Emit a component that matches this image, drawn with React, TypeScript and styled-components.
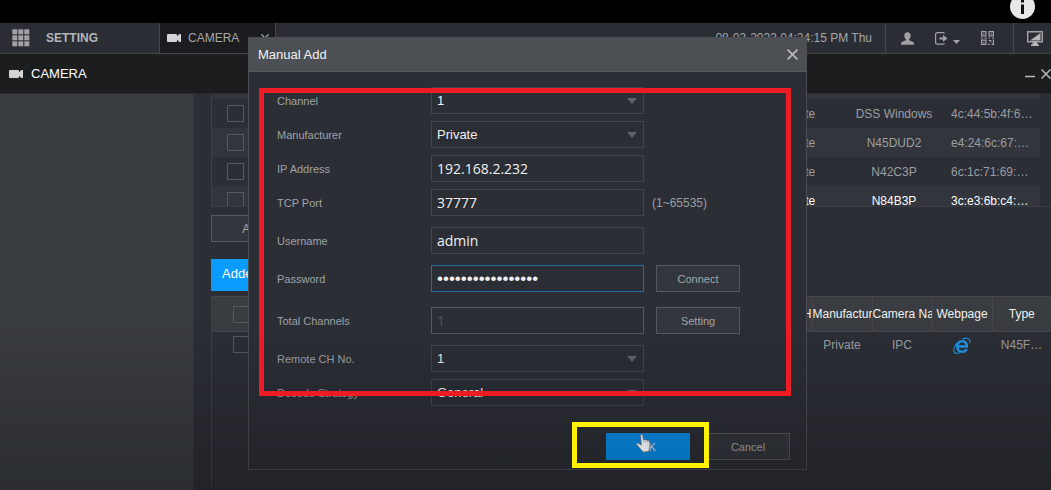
import React from "react";
import styled, { createGlobalStyle, css } from "styled-components";

const GlobalStyle = createGlobalStyle`
  * { box-sizing: border-box; }
  body {
    margin: 0;
    background: #2b2e35;
    font-family: "Liberation Sans", Arial, sans-serif;
    font-size: 12px;
    color: #9c9ea2;
  }
  button, input, select { font-family: inherit; margin: 0; }
`;

const Page = styled.div`
  position: relative;
  display: flex;
  flex-direction: column;
  min-height: 100vh;
  overflow: hidden;
`;

const Letterbox = styled.div`
  height: 23px;
  background: #000;
`;

const InfoBadge = styled.button`
  position: absolute;
  top: -6px;
  right: 16px;
  width: 25px;
  height: 25px;
  padding: 0;
  border: 0;
  background: none;
  svg { display: block; }
`;

const NavBar = styled.nav`
  display: flex;
  height: 31px;
  background: #2a2d33;
  border-bottom: 1px solid #45474b;
`;

const Brand = styled.a`
  display: flex;
  align-items: center;
  gap: 16px;
  width: 160px;
  padding-left: 12px;
  border-right: 1px solid #45474b;
  color: #b4b6b9;
  font-weight: bold;
  text-decoration: none;
`;

const NavTab = styled.a`
  display: flex;
  align-items: center;
  gap: 7px;
  width: 116px;
  padding: 0 6px 0 7px;
  background: #1b1c1f;
  border-right: 1px solid #45474b;
  color: #a4a6a9;
  text-decoration: none;
  svg:last-child { margin-left: auto; }
`;

const Clock = styled.time`
  display: flex;
  align-items: center;
  margin-left: auto;
  padding-right: 13px;
  color: #a4a6a9;
`;

const NavTools = styled.div`
  display: flex;
  align-items: center;
  padding: 0 19px 0 15px;
  border-left: 1px solid #45474b;
  gap: 21px;
`;

const NavDisplay = styled(NavTools)`
  padding: 0 8px 0 13px;
`;

const IconButton = styled.button`
  display: flex;
  align-items: center;
  gap: 5px;
  padding: 0;
  border: 0;
  background: none;
  color: #a4a6a9;
`;

const TitleBar = styled.header`
  display: flex;
  align-items: center;
  gap: 8px;
  height: 40px;
  padding-left: 9px;
  background: #1c1d1f;
  color: #fff;
  border-bottom: 1px solid #26282b;
`;

const Title = styled.h1`
  margin: 0;
  font-size: 13px;
  font-weight: normal;
`;

const WindowControls = styled.div`
  display: flex;
  gap: 6px;
  margin-left: auto;
`;

const Main = styled.main`
  display: flex;
  flex: 1;
`;

const Sidebar = styled.aside`
  flex: 0 0 194px;
  background: #393c40;
  border-right: 1px solid #33363b;
`;

const Content = styled.section`
  display: flex;
  flex-direction: column;
  flex: 1;
  min-width: 0;
  padding-left: 17px;
`;

const FoundDevices = styled.div`
  height: 113px;
  padding-right: 11px;
  overflow: hidden;
  border-bottom: 1px solid #393c41;
`;

const Table = styled.table`
  width: 100%;
  table-layout: fixed;
  border-collapse: collapse;
  td, th {
    padding: 0;
    text-align: center;
    font-weight: normal;
    white-space: nowrap;
    overflow: hidden;
  }
`;

const FoundTable = styled(Table)`
  border-collapse: separate;
  border-spacing: 0;
  border-top: 5px solid #32353b;
  border-left: 1px solid #3d4045;
`;

const FoundRow = styled.tr<{ $active?: boolean }>`
  height: 29px;
  color: ${(p) => (p.$active ? "#fff" : "#9c9ea2")};
  &:nth-child(even) { background: #32353b; }
  td:last-child { padding-left: 7px; text-align: left; }
`;

const Check = styled.input`
  appearance: none;
  display: block;
  width: 17px;
  height: 17px;
  margin: 0 auto 0 15px;
  border: 1px solid #55585d;
  background: transparent;
`;

const AddedCheck = styled(Check)`
  margin-left: 21px;
`;

const Button = styled.button<{ $primary?: boolean }>`
  width: 84px;
  height: 27px;
  padding: 0;
  border: 1px solid ${(p) => (p.$primary ? "#078de8" : "#55585d")};
  background: ${(p) => (p.$primary ? "#078de8" : "#33363d")};
  color: ${(p) => (p.$primary ? "#d5e9f8" : "#a4a6a9")};
  font-size: 11px;
`;

const AddButton = styled(Button)`
  margin: 8px 0 17px;
  font-size: 12px;
`;

const AddedTab = styled.button`
  align-self: flex-start;
  height: 32px;
  margin-bottom: 5px;
  padding: 0 11px 3px;
  border: 0;
  background: #0a9bff;
  color: #fff;
  font-size: 13px;
`;

const AddedPanel = styled.div`
  flex: 1;
  border-left: 1px solid #3d4045;
`;

const AddedTable = styled(Table)`
  thead tr {
    height: 35px;
    background: #393c40;
    color: #f2f2f2;
    border-top: 1px solid #45474b;
    border-bottom: 1px solid #45474b;
  }
  tbody tr { height: 26px; }
  td svg { display: block; margin: 2px auto 0; }
`;

const HeadCell = styled.th<{ $align?: "left" | "right" }>`
  border-right: 1px solid #45474b;
  && { text-align: ${(p) => p.$align ?? "center"}; }
`;

const Layer = styled.div`
  position: absolute;
  inset: 0;
  display: flex;
  justify-content: center;
  align-items: flex-start;
  padding: 37px 0 0 4px;
`;

const Shade = styled.div`
  position: absolute;
  inset: 0;
  pointer-events: none;
  background: linear-gradient(to bottom, rgba(0, 0, 0, 0) 64%, rgba(0, 0, 0, 0.24) 100%);
`;

const Dialog = styled.div`
  width: 559px;
  background: #2b2e35;
  border: 1px solid #4a4d51;
`;

const DialogHeader = styled.div`
  display: flex;
  align-items: center;
  justify-content: space-between;
  height: 34px;
  padding: 0 8px 0 9px;
  background: #4c5054;
  border-bottom: 1px solid #55585c;
  color: #f2f2f2;
`;

const DialogTitle = styled.h2`
  margin: 0;
  font-size: 13px;
  font-weight: normal;
`;

const DialogBody = styled.div`
  padding: 15px 28px 16px;
`;

const rowGap = { none: 0, tight: 7, loose: 11, wide: 15 };

const Row = styled.div<{ $gap: keyof typeof rowGap }>`
  display: grid;
  grid-template-columns: 154px 213px auto;
  align-items: center;
  height: 27px;
  margin-top: ${(p) => rowGap[p.$gap]}px;
`;

const Label = styled.label`
  font-size: 11px;
  color: #a0a2a6;
`;

const field = css`
  width: 100%;
  height: 27px;
  padding: 0 5px;
  border: 1px solid #42454a;
  border-radius: 0;
  background: transparent;
  color: #f0f0f0;
  outline: none;
`;

const Input = styled.input<{ $focused?: boolean }>`
  ${field};
  border-color: ${(p) => (p.$focused ? "#226ca8" : "#42454a")};
  font-family: "Open Sans", "Noto Sans", sans-serif;
  font-size: 14px;
  &[type="password"] {
    font-family: "Liberation Sans", Arial, sans-serif;
    font-size: 17px;
  }
  &:disabled { border-color: #55585d; color: #55585d; }
`;

const SelectBox = styled.div`
  position: relative;
  svg {
    position: absolute;
    right: 7px;
    top: 11px;
    pointer-events: none;
  }
`;

const Select = styled.select`
  ${field};
  display: block;
  appearance: none;
  font-size: 13px;
`;

const Extra = styled.div`
  padding-left: 12px;
`;

const Hint = styled.span`
  margin-left: -4px;
  color: #9c9ea2;
`;

const DialogFooter = styled.div`
  display: flex;
  justify-content: flex-end;
  gap: 16px;
  padding: 10px 16px 9px;
  border-top: 1px solid #2e3138;
`;

const Marks = styled(Layer)`
  pointer-events: none;
`;

const MarkArea = styled.div`
  position: relative;
  width: 559px;
`;

const Frame = styled.div`
  position: absolute;
  border: 5px solid #ed1c24;
  top: 51px;
  left: 11px;
  width: 532px;
  height: 308px;
`;

const OkFrame = styled(Frame)`
  border-color: #fff200;
  top: 385px;
  left: 324px;
  width: 137px;
  height: 46px;
`;

const Pointer = styled.svg`
  position: absolute;
  top: 397px;
  left: 388px;
`;

const CameraIcon = () => (
  <svg width="14" height="10" viewBox="0 0 14 10" fill="#d2d3d5">
    <rect y="1" width="10" height="8" rx="1" />
    <path d="M9 4l3.500-3H14v8h-1.500L9 6z" />
  </svg>
);

const Cross = ({ size = 10 }: { size?: number }) => (
  <svg width={size} height={size} viewBox="0 0 10 10" stroke="#b8babc" strokeWidth="1.500" fill="none">
    <path d="M.5.5l9 9M9.500.5l-9 9" />
  </svg>
);

const Caret = () => (
  <svg width="10" height="6" viewBox="0 0 10 6" fill="#606368">
    <path d="M0 0h10L5 6z" />
  </svg>
);

const GridIcon = () => (
  <svg width="18" height="18" viewBox="0 0 18 18" fill="#a0a2a5">
    {[0, 6, 12].map((y) => [0, 6, 12].map((x) => <rect key={`${x}-${y}`} x={x + 0.3} y={y + 0.3} width="5" height="5" />))}
  </svg>
);

const UserIcon = () => (
  <svg width="13" height="13" viewBox="0 0 13 13" fill="#a0a2a5">
    <path d="M6.500.3C8.500.3 9.700 1.600 9.700 3.600 9.700 5.400 8.900 6.700 8 7.400v.8l3.600 1.500c1 .4 1.400 1 1.400 2.300v.7H0V12c0-1.300.4-1.900 1.400-2.300L5 8.200v-.8C4.100 6.700 3.300 5.400 3.300 3.600 3.300 1.600 4.500.3 6.500.3z" />
  </svg>
);

const LogoutIcon = () => (
  <svg width="13" height="13" viewBox="0 0 13 13" fill="none" stroke="#a0a2a5">
    <path d="M9.500 1.500C9.200.8 8.700.6 8 .6H2.500C1.200.6.6 1.200.6 2.500v7.800c0 1.300.6 1.900 1.900 1.900H8c.7 0 1.200-.2 1.500-.9" strokeWidth="1.200" />
    <path d="M4.500 5.400H8V3l4.500 3.400L8 9.800V7.400H4.500z" fill="#a0a2a5" stroke="none" />
  </svg>
);

const QrIcon = () => (
  <svg width="13" height="14" viewBox="0 0 13 14" fill="none" stroke="#a0a2a5" strokeWidth="1.200">
    <path d="M.6.6h4.300v4.300H.6zM8.100.6h4.300v4.300H8.100zM.6 9.100h4.300v4.300H.6z" />
    <path d="M2.200 2.800h1.200M9.700 2.800h1.200M2.200 11.300h1.200M0 7h2M3.500 7h2.500M7.500 7h1.800M11 7h2M12.400 8.500v4.900H10.500M7 13.200h1.800M7.500 9.500h2.300v1.800" />
  </svg>
);

const MonitorIcon = () => (
  <svg width="16" height="15" viewBox="0 0 16 15">
    <path d="M.7.7h14.600v10H.7z" fill="none" stroke="#a0a2a5" strokeWidth="1.400" />
    <path d="M13.500 2v7.500H3zM6 11h4l.8 2.400H12V15H4v-1.600h1.200z" fill="#b4b6b9" />
  </svg>
);

const BrowserIcon = () => (
  <svg width="18" height="18" viewBox="0 0 18 18" fill="none" stroke="#1f95e6">
    <path d="M4.500 9.500h9.300C13.800 6.300 12 4.300 9.200 4.300S4.300 6.400 4.300 9.600s1.900 5.200 5 5.200c2.100 0 3.600-.9 4.300-2.700" strokeWidth="2.600" />
    <path d="M9.500 2.200C12.600.6 16 .8 16.800 3.200c.3.900.1 1.800-.3 2.600M3.800 6.200C1.200 9.400.3 13 1.200 15c.8 1.800 3.200 1.700 5.800.4" strokeWidth="1.100" />
  </svg>
);

const found = [
  { maker: "Private", type: "DSS Windows", mac: "4c:44:5b:4f:6…" },
  { maker: "Private", type: "N45DUD2", mac: "e4:24:6c:67:…" },
  { maker: "Private", type: "N42C3P", mac: "6c:1c:71:69:…" },
  { maker: "Private", type: "N84B3P", mac: "3c:e3:6b:c4:…", active: true },
];

const SelectRow = ({ id, label, value, gap }: { id: string; label: string; value: string; gap: keyof typeof rowGap }) => (
  <Row $gap={gap}>
    <Label htmlFor={id}>{label}</Label>
    <SelectBox>
      <Select id={id} defaultValue={value}>
        <option>{value}</option>
      </Select>
      <Caret />
    </SelectBox>
  </Row>
);

export default function App() {
  return (
    <Page>
      <GlobalStyle />
      <Letterbox />
      <NavBar>
        <Brand href="#setting">
          <GridIcon />
          SETTING
        </Brand>
        <NavTab href="#camera">
          <CameraIcon />
          CAMERA
          <Cross size={8} />
        </NavTab>
        <Clock>08-03-2023 04:24:15 PM Thu</Clock>
        <NavTools>
          <IconButton aria-label="User"><UserIcon /></IconButton>
          <IconButton aria-label="Log out">
            <LogoutIcon />
            <svg width="7" height="12" viewBox="0 0 7 12" fill="#a0a2a5"><path d="M0 8h7l-3.500 4z" /></svg>
          </IconButton>
          <IconButton aria-label="QR code"><QrIcon /></IconButton>
        </NavTools>
        <NavDisplay>
          <IconButton aria-label="Display"><MonitorIcon /></IconButton>
        </NavDisplay>
      </NavBar>
      <TitleBar>
        <CameraIcon />
        <Title>CAMERA</Title>
        <WindowControls>
          <IconButton aria-label="Minimize">
            <svg width="10" height="10" viewBox="0 0 10 10"><path d="M0 7.500h10" stroke="#b8babc" strokeWidth="1.500" /></svg>
          </IconButton>
          <IconButton aria-label="Close window"><Cross /></IconButton>
        </WindowControls>
      </TitleBar>
      <Main>
        <Sidebar />
        <Content>
          <FoundDevices>
            <FoundTable>
              <colgroup>
                <col style={{ width: 50 }} />
                <col />
                <col style={{ width: 95 }} />
                <col style={{ width: 100 }} />
                <col style={{ width: 96 }} />
              </colgroup>
              <tbody>
                {found.map((d) => (
                  <FoundRow key={d.mac} $active={d.active}>
                    <td><Check type="checkbox" aria-label={d.type} /></td>
                    <td />
                    <td>{d.maker}</td>
                    <td>{d.type}</td>
                    <td>{d.mac}</td>
                  </FoundRow>
                ))}
              </tbody>
            </FoundTable>
          </FoundDevices>
          <AddButton>Add</AddButton>
          <AddedTab>Added</AddedTab>
          <AddedPanel>
            <AddedTable>
              <colgroup>
                <col style={{ width: 60 }} />
                <col />
                <col style={{ width: 60 }} />
                <col style={{ width: 60 }} />
                <col style={{ width: 60 }} />
                <col style={{ width: 60 }} />
                <col style={{ width: 59 }} />
              </colgroup>
              <thead>
                <tr>
                  <th><AddedCheck type="checkbox" aria-label="Select all" /></th>
                  <th />
                  <HeadCell $align="right">CH</HeadCell>
                  <HeadCell $align="left">Manufactur</HeadCell>
                  <HeadCell $align="left">Camera Na</HeadCell>
                  <HeadCell>Webpage</HeadCell>
                  <th>Type</th>
                </tr>
              </thead>
              <tbody>
                <tr>
                  <td><AddedCheck type="checkbox" aria-label="Select camera" /></td>
                  <td />
                  <td />
                  <td>Private</td>
                  <td>IPC</td>
                  <td><BrowserIcon /></td>
                  <td>N45F…</td>
                </tr>
              </tbody>
            </AddedTable>
          </AddedPanel>
        </Content>
      </Main>

      <Layer>
        <Dialog role="dialog" aria-labelledby="dialog-title">
          <DialogHeader>
            <DialogTitle id="dialog-title">Manual Add</DialogTitle>
            <IconButton aria-label="Close"><Cross size={11} /></IconButton>
          </DialogHeader>
          <DialogBody>
            <SelectRow id="channel" label="Channel" value="1" gap="none" />
            <SelectRow id="maker" label="Manufacturer" value="Private" gap="tight" />
            <Row $gap="tight">
              <Label htmlFor="ip">IP Address</Label>
              <Input id="ip" defaultValue="192.168.2.232" />
            </Row>
            <Row $gap="tight">
              <Label htmlFor="port">TCP Port</Label>
              <Input id="port" defaultValue="37777" />
              <Extra><Hint>(1~65535)</Hint></Extra>
            </Row>
            <Row $gap="loose">
              <Label htmlFor="user">Username</Label>
              <Input id="user" defaultValue="admin" />
            </Row>
            <Row $gap="loose">
              <Label htmlFor="password">Password</Label>
              <Input id="password" type="password" defaultValue="12345678901234567" $focused />
              <Extra><Button>Connect</Button></Extra>
            </Row>
            <Row $gap="wide">
              <Label htmlFor="total">Total Channels</Label>
              <Input id="total" defaultValue="1" disabled />
              <Extra><Button>Setting</Button></Extra>
            </Row>
            <SelectRow id="remote" label="Remote CH No." value="1" gap="loose" />
            <SelectRow id="strategy" label="Decode Strategy" value="General" gap="tight" />
          </DialogBody>
          <DialogFooter>
            <Button $primary>OK</Button>
            <Button>Cancel</Button>
          </DialogFooter>
        </Dialog>
      </Layer>
      <Shade />
      <Marks>
        <MarkArea>
          <Frame />
          <OkFrame />
          <Pointer width="17" height="19" viewBox="0 0 17 19">
            <path
              d="M4.500 1.500c0-1.300 2-1.300 2.200 0L7.600 6c.6-.9 1.900-.7 2.200.3.700-.7 1.800-.5 2 .5.800-.5 1.700-.1 1.800.8l.4 3.400c.1 1.800-.6 3-1 4.500v1.800l-6 .9-.8-1.500C4.500 15 2.600 13 .8 10.700c-.6-1 .4-2 1.400-1.500l3.200 1.900z"
              fill="#d9dcdf"
              stroke="#5d6670"
              strokeWidth=".8"
            />
            <path d="M7.600 6l.4 2.500M9.800 6.300l.3 2.400M11.800 6.800l.2 2" stroke="#8a9199" strokeWidth=".7" fill="none" />
          </Pointer>
        </MarkArea>
      </Marks>
      <InfoBadge aria-label="Information">
        <svg width="25" height="25" viewBox="0 0 25 25">
          <circle cx="12.500" cy="12.500" r="12.500" fill="#e8e8e8" />
          <path d="M11 10.500h3V20h-3zM11 5.500h3v3h-3z" fill="#111" />
        </svg>
      </InfoBadge>
    </Page>
  );
}
